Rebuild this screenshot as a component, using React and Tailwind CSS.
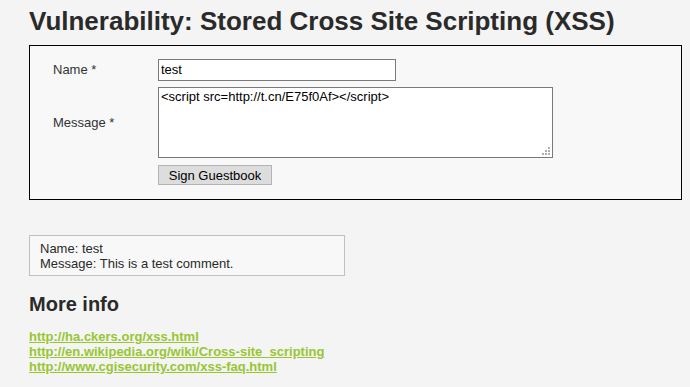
export default function App() {
  return (
    <div className="min-h-[387px] w-[690px] bg-[#f4f4f4] pl-[29px] pt-[5px] text-[13px] text-[#2f2f2f] font-['Liberation_Sans',Arial,sans-serif]">
      <h1 className="text-[26px] font-bold leading-[32px] text-[#2a2a2a]">
        Vulnerability: Stored Cross Site Scripting (XSS)
      </h1>
      <div className="mt-[8px] w-[653px] border border-black bg-[#f7f8f7] pl-[23px] pt-[13px] pb-[14px]">
        <div className="grid grid-cols-[105px_auto] items-center">
          <label className="text-[13px] text-[#333]">Name *</label>
          <div className="h-[22px] w-[238px] border border-[#7a7a7a] bg-white px-[2px] text-[13px] leading-[20px] text-black">test</div>
          <label className="pt-[6px] text-[13px] text-[#333]">Message *</label>
          <div className="relative mt-[6px] h-[71px] w-[395px] border border-[#7a7a7a] bg-white px-[2px] pt-[1px] text-[13px] leading-[16px] text-black">
            &lt;script src=http://t.cn/E75f0Af&gt;&lt;/script&gt;
            <svg className="absolute bottom-[2px] right-[2px]" width="8" height="8" viewBox="0 0 8 8">
              <rect x="6" y="0" width="2" height="2" fill="#b0b0b0" />
              <rect x="3" y="3" width="2" height="2" fill="#b0b0b0" />
              <rect x="6" y="3" width="2" height="2" fill="#b0b0b0" />
              <rect x="0" y="6" width="2" height="2" fill="#b0b0b0" />
              <rect x="3" y="6" width="2" height="2" fill="#b0b0b0" />
              <rect x="6" y="6" width="2" height="2" fill="#b0b0b0" />
            </svg>
          </div>
          <div />
          <button className="mt-[7px] h-[20px] w-[114px] border border-[#b4b4b4] bg-[#dddddd] pt-[1px] text-[13px] leading-[18px] text-black">
            Sign Guestbook
          </button>
        </div>
      </div>
      <div className="mt-[35px] h-[41px] w-[316px] border border-[#c0c0c0] bg-[#f7f8f7] pl-[10px] pt-[5px] text-[13px] leading-[15px] text-[#2a2a2a]">
        <div>Name: test</div>
        <div>Message: This is a test comment.</div>
      </div>
      <h2 className="mt-[16px] text-[20px] font-bold leading-[24px] text-[#2a2a2a]">More info</h2>
      <div className="mt-[13px] flex flex-col text-[13px] font-bold leading-[15px]">
        <a className="text-[#98c631] underline w-fit" href="#">http://ha.ckers.org/xss.html</a>
        <a className="text-[#98c631] underline w-fit" href="#">http://en.wikipedia.org/wiki/Cross-site_scripting</a>
        <a className="text-[#98c631] underline w-fit" href="#">http://www.cgisecurity.com/xss-faq.html</a>
      </div>
    </div>
  );
}
